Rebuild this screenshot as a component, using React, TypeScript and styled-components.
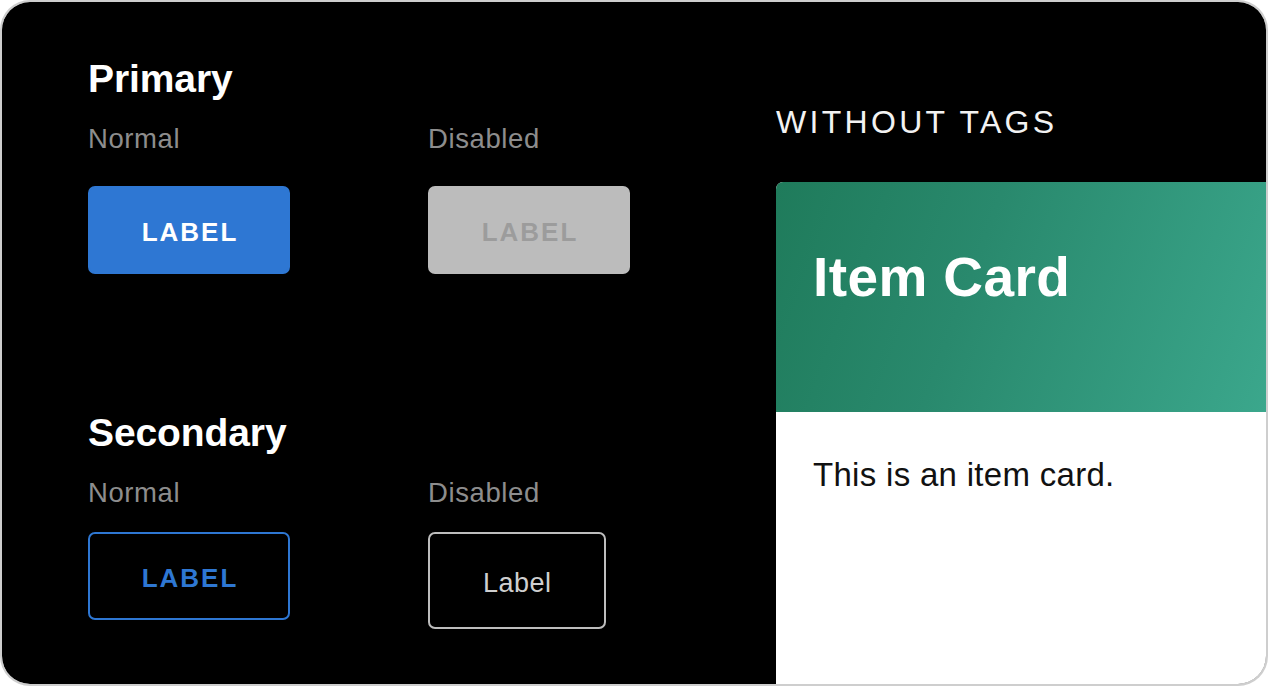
import React from "react";
import styled, { createGlobalStyle } from "styled-components";

const COLOR = {
  BLUE: "#2e77d3",
  GREY_TEXT: "#8d8d8d",
  DISABLED_BG: "#bcbcbc",
  DISABLED_TEXT: "#9c9c9c",
  OUTLINE_GREY: "#bdbdbd",
};

const GlobalStyle = createGlobalStyle`
  html, body {
    margin: 0;
    padding: 0;
    background: #ffffff;
  }
  body {
    font-family: "Liberation Sans", Arial, Helvetica, sans-serif;
    -webkit-font-smoothing: antialiased;
  }
`;

const Frame = styled.div`
  box-sizing: border-box;
  width: 1268px;
  height: 686px;
  display: flex;
  background: #000;
  background-clip: padding-box;
  border: 2px solid rgba(180, 180, 180, 0.65);
  border-radius: 30px;
  overflow: hidden;
`;

const LeftPane = styled.div`
  width: 774px;
  flex: 0 0 auto;
  box-sizing: border-box;
  padding: 57px 0 0 86px;
  display: flex;
  flex-direction: column;
`;

const Section = styled.section<{ $top?: number }>`
  display: flex;
  flex-direction: column;
  margin-top: ${(p) => p.$top ?? 0}px;
`;

const Heading = styled.h2`
  margin: 0 0 27px;
  font-size: 39px;
  line-height: 39px;
  font-weight: 700;
  color: #fff;
  letter-spacing: -0.1px;
`;

const Row = styled.div`
  display: grid;
  grid-template-columns: 340px 340px;
  align-items: start;
`;

const Cell = styled.div<{ $gap: number }>`
  display: flex;
  flex-direction: column;
  align-items: flex-start;
  gap: ${(p) => p.$gap}px;
`;

const StateLabel = styled.span`
  font-size: 27.5px;
  line-height: 27px;
  letter-spacing: 0.6px;
  color: ${COLOR.GREY_TEXT};
`;

type Variant = "primary" | "primaryDisabled" | "secondary" | "secondaryDisabled";

const Button = styled.button<{ $variant: Variant }>`
  box-sizing: border-box;
  display: flex;
  align-items: center;
  justify-content: center;
  font-family: inherit;
  border-radius: 7px;
  cursor: pointer;
  padding: 4px 0 0;
  width: 202px;
  height: 88px;
  font-size: 26px;
  font-weight: 700;
  letter-spacing: 2px;
  text-indent: 2px;
  border: 2px solid transparent;

  ${(p) =>
    p.$variant === "primary" &&
    `
    background: ${COLOR.BLUE};
    border-color: ${COLOR.BLUE};
    color: #fff;
  `}

  ${(p) =>
    p.$variant === "primaryDisabled" &&
    `
    background: ${COLOR.DISABLED_BG};
    border-color: ${COLOR.DISABLED_BG};
    color: ${COLOR.DISABLED_TEXT};
    cursor: default;
  `}

  ${(p) =>
    p.$variant === "secondary" &&
    `
    background: transparent;
    border-color: ${COLOR.BLUE};
    color: ${COLOR.BLUE};
  `}

  ${(p) =>
    p.$variant === "secondaryDisabled" &&
    `
    background: transparent;
    border-color: ${COLOR.OUTLINE_GREY};
    color: #cfcfcf;
    width: 178px;
    height: 97px;
    font-size: 27px;
    font-weight: 400;
    letter-spacing: 0.5px;
    text-indent: 0.5px;
    padding-top: 5px;
    cursor: default;
  `}
`;

const RightPane = styled.div`
  flex: 1;
  display: flex;
  flex-direction: column;
  padding-top: 104px;
  min-width: 0;
`;

const GroupTitle = styled.h3`
  margin: 0 0 44px;
  font-size: 32px;
  line-height: 32px;
  font-weight: 400;
  letter-spacing: 3.3px;
  color: #f2f2f2;
`;

const Card = styled.div`
  flex: 1;
  display: flex;
  flex-direction: column;
  background: #fff;
  border-radius: 7px 0 0 0;
  overflow: hidden;
`;

const CardHeader = styled.div`
  height: 230px;
  box-sizing: border-box;
  padding: 68px 0 0 37px;
  background: linear-gradient(110deg, #1f7b5b 0%, #29896d 40%, #3ba78c 100%);
`;

const CardTitle = styled.h1`
  margin: 0;
  font-size: 55px;
  line-height: 55px;
  font-weight: 700;
  letter-spacing: 0.4px;
  color: #fff;
`;

const CardBody = styled.div`
  padding: 46px 0 0 37px;
`;

const CardText = styled.p`
  margin: 0;
  font-size: 33px;
  line-height: 33px;
  letter-spacing: 0.3px;
  color: #111;
`;

const App = (): JSX.Element => {
  return (
    <>
      <GlobalStyle />
      <Frame>
        <LeftPane>
          <Section>
            <Heading>Primary</Heading>
            <Row>
              <Cell $gap={34}>
                <StateLabel>Normal</StateLabel>
                <Button $variant="primary">LABEL</Button>
              </Cell>
              <Cell $gap={34}>
                <StateLabel>Disabled</StateLabel>
                <Button $variant="primaryDisabled" disabled>
                  LABEL
                </Button>
              </Cell>
            </Row>
          </Section>
          <Section $top={139}>
            <Heading>Secondary</Heading>
            <Row>
              <Cell $gap={26}>
                <StateLabel>Normal</StateLabel>
                <Button $variant="secondary">LABEL</Button>
              </Cell>
              <Cell $gap={26}>
                <StateLabel>Disabled</StateLabel>
                <Button $variant="secondaryDisabled" disabled>
                  Label
                </Button>
              </Cell>
            </Row>
          </Section>
        </LeftPane>
        <RightPane>
          <GroupTitle>WITHOUT TAGS</GroupTitle>
          <Card>
            <CardHeader>
              <CardTitle>Item Card</CardTitle>
            </CardHeader>
            <CardBody>
              <CardText>This is an item card.</CardText>
            </CardBody>
          </Card>
        </RightPane>
      </Frame>
    </>
  );
};

export default App;
